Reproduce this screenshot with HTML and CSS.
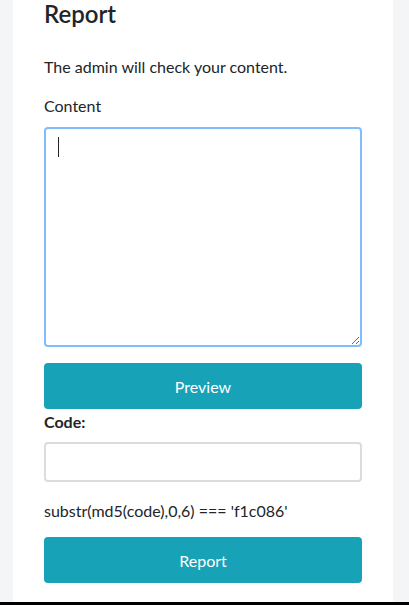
FILE: index.html
```
<!DOCTYPE html>
<html lang="en">
<head>
<meta charset="utf-8">
<title>Report</title>
<link rel="stylesheet" href="styles.css">
</head>
<body>
<div class="page">
  <main class="card">
    <h1 class="title">Report</h1>
    <p class="lead">The admin will check your content.</p>
    <label class="label" for="content">Content</label>
    <div class="area-wrap">
      <textarea id="content" class="area"></textarea>
      <span class="caret"></span>
    </div>
    <button class="btn btn-preview" type="button">Preview</button>
    <label class="label label-bold" for="code">Code:</label>
    <input id="code" class="input" type="text">
    <p class="hint">substr(md5(code),0,6) === 'f1c086'</p>
    <button class="btn btn-report" type="button">Report</button>
  </main>
</div>
<div class="bar"></div>
</body>
</html>
```
FILE: styles.css
```
html, body {
  margin: 0;
  padding: 0;
  height: 605px;
  overflow: hidden;
}
body {
  background: #f4f5f7;
  font-family: Lato, "Open Sans", sans-serif;
  color: #212529;
  font-size: 16px;
  display: flex;
  flex-direction: column;
}
.page {
  flex: 1;
  display: flex;
  padding-left: 13px;
}
.card {
  width: 380px;
  background: #fff;
  box-sizing: border-box;
  padding: 0 31px;
  display: flex;
  flex-direction: column;
}
.title {
  margin: -1px 0 0;
  font-size: 24px;
  font-weight: 600;
  line-height: 29px;
}
.lead {
  margin: 27px 0 0;
  line-height: 24px;
}
.label {
  margin-top: 15px;
  line-height: 24px;
}
.label-bold {
  font-weight: 700;
  margin-top: 1px;
}
.area-wrap {
  position: relative;
  margin-top: 9px;
}
.area {
  display: block;
  box-sizing: border-box;
  width: 318px;
  height: 220px;
  border: 2px solid #80bdff;
  border-radius: 4px;
  outline: none;
  padding: 8px 12px;
  font: inherit;
}
.caret {
  position: absolute;
  left: 14px;
  top: 10px;
  width: 1px;
  height: 20px;
  background: #212529;
}
.btn {
  display: block;
  width: 318px;
  height: 46px;
  border: 0;
  border-radius: 4px;
  background: #17a2b8;
  color: #fff;
  font: inherit;
  font-size: 16px;
  padding: 0;
}
.btn-preview { margin-top: 16px; }
.input {
  display: block;
  box-sizing: border-box;
  width: 318px;
  height: 40px;
  margin-top: 8px;
  border: 2px solid #dcdcdc;
  border-radius: 4px;
  font: inherit;
  padding: 6px 12px;
}
.hint {
  margin: 17px 0 0;
  line-height: 24px;
}
.btn-report { margin-top: 14px; }
.bar {
  height: 3px;
  background: #000;
}
```
